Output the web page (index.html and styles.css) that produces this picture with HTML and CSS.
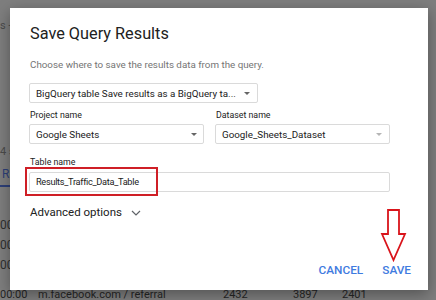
FILE: index.html
```html
<!DOCTYPE html>
<html>
<head>
<meta charset="utf-8">
<link rel="stylesheet" href="styles.css">
</head>
<body>
<div class="bg">
  <div class="bg-r1">s -</div>
  <div class="bg-r2">4 s</div>
  <div class="bg-tab">R</div>
  <div class="bg-row bg-first">00:00</div>
  <div class="bg-row">00:00</div>
  <div class="bg-row">00:00</div>
  <div class="bg-last">
    <span>00:00</span><span>m.facebook.com / referral</span><span>2432</span><span>3897</span><span>2401</span>
  </div>
</div>

<div class="dialog">
  <h1 class="title">Save Query Results</h1>
  <p class="subtitle">Choose where to save the results data from the query.</p>
  <div class="select select-type">
    <span class="select-text">BigQuery table Save results as a BigQuery ta...</span>
    <span class="caret"></span>
  </div>
  <div class="fields">
    <div class="field">
      <label class="label">Project name</label>
      <div class="select">
        <span class="select-text">Google Sheets</span>
        <span class="caret"></span>
      </div>
    </div>
    <div class="field">
      <label class="label">Dataset name</label>
      <div class="select">
        <span class="select-text">Google_Sheets_Dataset</span>
        <span class="caret caret-light"></span>
      </div>
    </div>
  </div>
  <label class="label label-table">Table name</label>
  <div class="input">Results_Traffic_Data_Table</div>
  <div class="advanced">Advanced options
    <svg class="chev" width="10" height="6" viewBox="0 0 10 6"><path d="M1 1 L5 5 L9 1" fill="none" stroke="#5f6368" stroke-width="1.2"/></svg>
  </div>
  <div class="footer">
    <span class="btn">CANCEL</span>
    <span class="btn">SAVE</span>
  </div>
  <div class="highlight"></div>
  <svg class="arrow" width="30" height="56" viewBox="0 0 30 56"><polygon points="8,2 19,2 19,26 25,26 13.5,52 2,26 8,26" fill="none" stroke="#d9141b" stroke-width="1.8" stroke-linejoin="miter"/></svg>
</div>
</body>
</html>
```

FILE: styles.css
```css
html, body {
  margin: 0;
  padding: 0;
}
body {
  width: 436px;
  height: 300px;
  overflow: hidden;
  background: #7e7e7e;
  font-family: Roboto, "Liberation Sans", Arial, sans-serif;
  position: relative;
}
.bg {
  padding-top: 19px;
  font-size: 11px;
  line-height: 14px;
  color: #2f2f2f;
}
.bg-r1 {
  height: 14px;
  color: #4a4a4a;
}
.bg-r2 {
  margin-top: 112px;
  height: 14px;
  color: #4a4a4a;
}
.bg-tab {
  margin-top: 8px;
  width: 10px;
  padding-left: 2px;
  padding-bottom: 4px;
  border-bottom: 2px solid #2d3f78;
  color: #2d3f78;
  font-size: 12px;
}
.bg-row {
  height: 20px;
  line-height: 20px;
  font-size: 12px;
}
.bg-first {
  margin-top: 28px;
}
.bg-last {
  display: grid;
  grid-template-columns: 38px 185px 70px 49px 60px;
  color: #262626;
  font-size: 11px;
  line-height: 14px;
  margin-top: 13px;
}
.dialog {
  position: absolute;
  left: 10px;
  top: 8px;
  width: 418px;
  height: 282px;
  box-sizing: border-box;
  background: #fff;
  padding: 16px 19px 0 19px;
  box-shadow: 0 4px 14px rgba(0,0,0,0.35);
  display: flex;
  flex-direction: column;
  align-items: flex-start;
}
.title {
  margin: 0;
  font-size: 16.3px;
  line-height: 20px;
  font-weight: 400;
  color: #212121;
  padding-left: 1px;
}
.subtitle {
  margin: 15px 0 0 0;
  font-size: 9.8px;
  line-height: 12px;
  color: #757575;
  padding-left: 1px;
}
.select {
  box-sizing: border-box;
  height: 20px;
  border: 1px solid #dadada;
  border-radius: 2px;
  display: flex;
  align-items: center;
  justify-content: space-between;
  padding: 0 6px 0 6px;
  font-size: 9.8px;
  color: #212121;
  width: 175px;
}
.select-type {
  margin-top: 12px;
  width: 229px;
}
.select-text {
  white-space: nowrap;
}
.caret {
  width: 0;
  height: 0;
  border-left: 3.5px solid transparent;
  border-right: 3.5px solid transparent;
  border-top: 3.5px solid #666;
}
.select-type .caret {
  margin-right: 1px;
}
.caret-light {
  border-top-color: #b5b5b5;
  margin-right: 1px;
}
.fields {
  display: flex;
  gap: 11px;
  margin-top: 7px;
}
.field {
  display: flex;
  flex-direction: column;
}
.label {
  font-size: 8.8px;
  line-height: 11px;
  color: #222;
  padding-left: 1px;
  margin-bottom: 3px;
}
.label-table {
  margin-top: 13px;
  margin-bottom: 4px;
}
.input {
  box-sizing: border-box;
  width: 361px;
  height: 20px;
  border: 1px solid #dadada;
  border-radius: 2px;
  font-size: 9.2px;
  letter-spacing: -0.3px;
  line-height: 18px;
  padding-left: 6px;
  color: #212121;
}
.advanced {
  margin-top: 13px;
  font-size: 11.5px;
  line-height: 14px;
  color: #212121;
  padding-left: 1px;
  display: flex;
  align-items: center;
  gap: 9px;
}
.chev {
  margin-top: 1px;
}
.footer {
  margin-top: auto;
  align-self: stretch;
  display: flex;
  justify-content: flex-end;
  gap: 19px;
  margin-right: -2px;
  padding-bottom: 13px;
}
.btn {
  font-size: 11.8px;
  line-height: 14px;
  font-weight: 500;
  color: #3f7be0;
}
.highlight {
  position: absolute;
  left: 15px;
  top: 159px;
  width: 129px;
  height: 25px;
  border: 2px solid #cf1f26;
}
.arrow {
  position: absolute;
  left: 370px;
  top: 200px;
}
```
